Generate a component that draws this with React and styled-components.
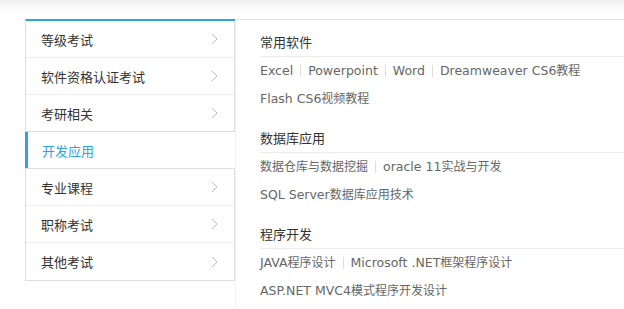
import React from 'react'
import styled, { createGlobalStyle } from 'styled-components'

const GlobalStyle = createGlobalStyle`
  body {
    margin: 0;
    background: #fff;
    font-family: "DejaVu Sans", "Noto Sans CJK SC", sans-serif;
  }
`

const TopBand = styled.div`
  height: 19px;
  background: linear-gradient(to bottom, #eeeeee 0, #f7f7f7 5px, #ffffff 11px);
`

const Main = styled.div`
  display: flex;
  padding-left: 25px;
  height: 290px;
`

const Menu = styled.ul`
  list-style: none;
  margin: 0;
  padding: 0;
  width: 210px;
  box-sizing: border-box;
  align-self: flex-start;
  border-top: 2px solid #2ea5e2;
  border-left: 1px solid #dddddd;
  border-bottom: 1px solid #dddddd;
`

const MenuItem = styled.li`
  display: flex;
  align-items: center;
  justify-content: space-between;
  height: 37px;
  box-sizing: border-box;
  padding: 0 16px 0 ${p => (p.$active ? 17 : 15)}px;
  font-size: 13px;
  color: ${p => (p.$active ? '#2ea5e2' : '#333')};
  border-right: 1px solid ${p => (p.$active ? '#fff' : '#dddddd')};
  border-bottom: 1px solid ${p => (p.$beforeActive || p.$active ? '#dddddd' : '#eeeeee')};
  box-shadow: ${p => (p.$active ? 'inset 3px 0 0 #2ea5e2' : 'none')};
  margin-left: ${p => (p.$active ? '-1px' : '0')};
  &:last-child {
    border-bottom: none;
  }
`

const Chevron = () => (
  <svg width="7" height="12" viewBox="0 0 7 12">
    <polyline points="1,1 6,6 1,11" fill="none" stroke="#bbbbbb" strokeWidth="1" />
  </svg>
)

const Panel = styled.div`
  flex: 1;
  border-top: 1px solid #e3e3e3;
  border-left: 1px solid #f3f3f3;
  padding: 10px 0 0 24px;
`

const Section = styled.div`
  margin-bottom: 13px;
`

const Heading = styled.div`
  height: 26px;
  line-height: 26px;
  font-size: 13px;
  color: #333;
  border-bottom: 1px solid #eeeeee;
`

const Row = styled.div`
  display: flex;
  align-items: center;
  height: 28px;
`

const Link = styled.span`
  display: flex;
  align-items: baseline;
  font-size: 12.5px;
  color: #666;
  line-height: 12px;
  padding: 0 7px;
  border-left: 1px solid #dddddd;
  white-space: pre;
  &:first-child {
    padding-left: 0;
    border-left: none;
  }
`

const Cjk = styled.span`
  font-size: 12px;
`

// latin runs stay at the link size, chinese runs are a touch smaller
const LinkText = ({ text }) =>
  text.split(/([\u4e00-\u9fff]+)/).filter(Boolean).map((part, i) =>
    /[\u4e00-\u9fff]/.test(part) ? <Cjk key={i}>{part}</Cjk> : <span key={i}>{part}</span>
  )

const menu = ['等级考试', '软件资格认证考试', '考研相关', '开发应用', '专业课程', '职称考试', '其他考试']
const activeIndex = 3

const sections = [
  {
    title: '常用软件',
    rows: [['Excel', 'Powerpoint', 'Word', 'Dreamweaver CS6教程'], ['Flash CS6视频教程']],
  },
  {
    title: '数据库应用',
    rows: [['数据仓库与数据挖掘', 'oracle 11实战与开发'], ['SQL Server数据库应用技术']],
  },
  {
    title: '程序开发',
    rows: [['JAVA程序设计', 'Microsoft .NET框架程序设计'], ['ASP.NET MVC4模式程序开发设计']],
  },
]

export default function App() {
  return (
    <>
      <GlobalStyle />
      <TopBand />
      <Main>
        <Menu>
          {menu.map((label, i) => (
            <MenuItem key={label} $active={i === activeIndex} $beforeActive={i === activeIndex - 1}>
              <span>{label}</span>
              {i !== activeIndex && <Chevron />}
            </MenuItem>
          ))}
        </Menu>
        <Panel>
          {sections.map(s => (
            <Section key={s.title}>
              <Heading>{s.title}</Heading>
              {s.rows.map((row, j) => (
                <Row key={j}>
                  {row.map(l => (
                    <Link key={l}>
                      <LinkText text={l} />
                    </Link>
                  ))}
                </Row>
              ))}
            </Section>
          ))}
        </Panel>
      </Main>
    </>
  )
}
